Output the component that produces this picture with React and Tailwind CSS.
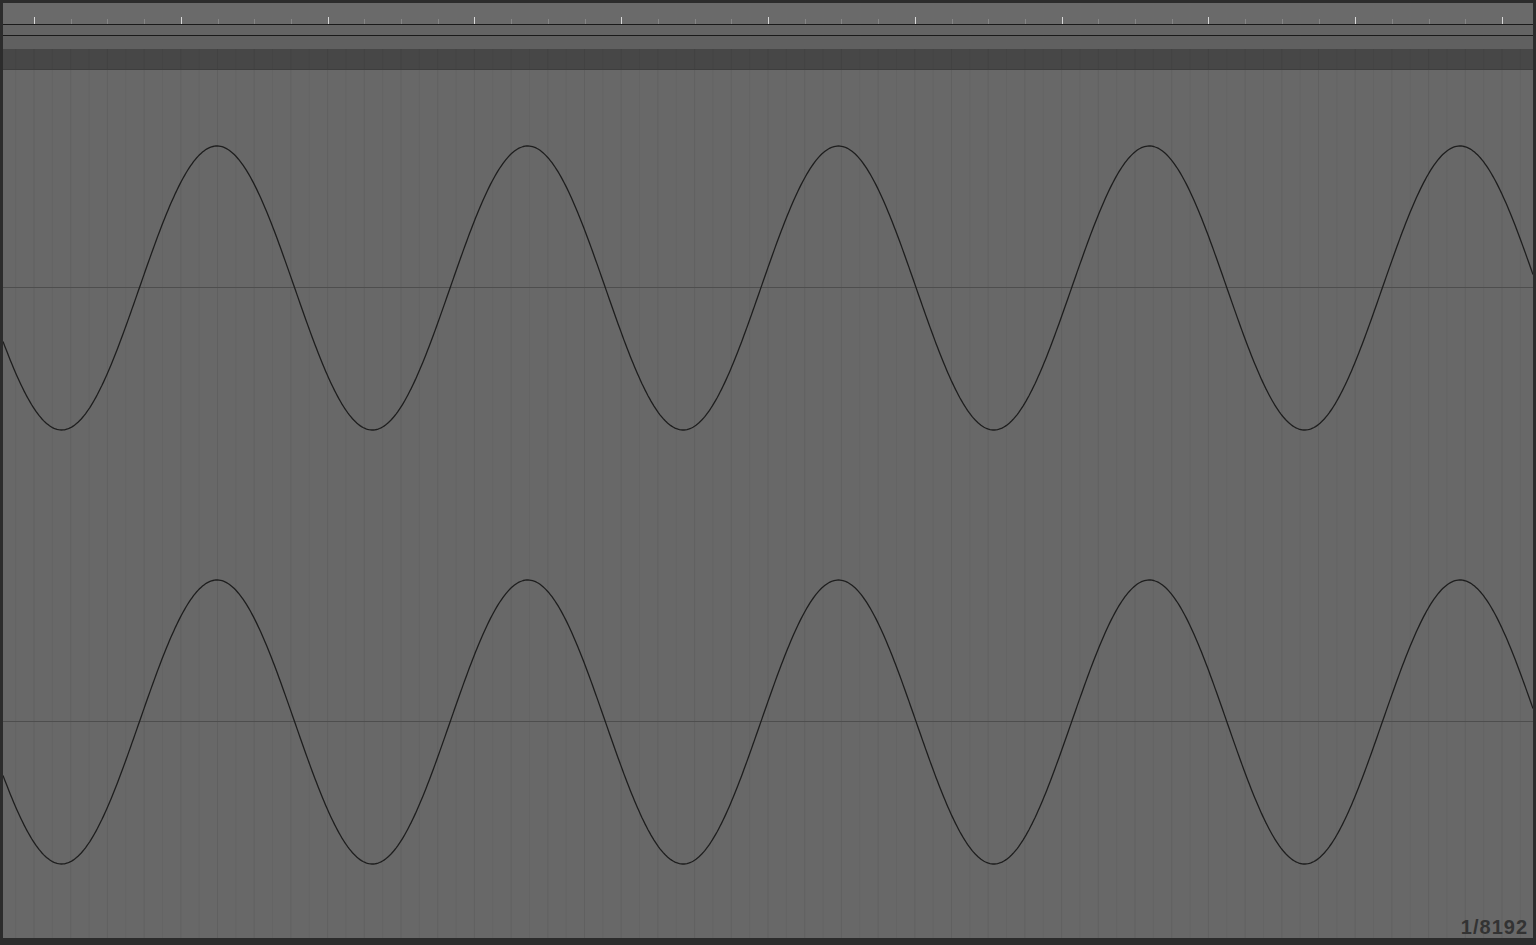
import React from "react";

const W = 1530;
const CH = 434;
const PERIOD = 310.75;
const PEAK_X = 214; // relative to content left (page x 217)
const AMP = 142;
const TICK = 36.7;

function wavePath(center) {
  let d = "";
  for (let x = 0; x <= W; x += 1.5) {
    const y = center - AMP * Math.cos((2 * Math.PI * (x - PEAK_X)) / PERIOD);
    d += (x === 0 ? "M" : "L") + x.toFixed(1) + " " + y.toFixed(1) + " ";
  }
  return d;
}

function gridLines(h) {
  const lines = [];
  for (let i = 0; ; i++) {
    const x = 31 + (TICK / 2) * i - TICK / 2;
    if (x > W) break;
    if (x < 0) continue;
    lines.push(
      <line
        key={i}
        x1={x}
        x2={x}
        y1={0}
        y2={h}
        stroke="#000"
        strokeOpacity={i % 2 === 1 ? 0.07 : 0.04}
        strokeWidth="1"
      />
    );
  }
  return lines;
}

function Ruler() {
  const ticks = [];
  for (let k = 0; ; k++) {
    const x = 31 + TICK * k;
    if (x > W) break;
    const major = k % 4 === 0;
    ticks.push(
      <line
        key={k}
        x1={Math.round(x) + 0.5}
        x2={Math.round(x) + 0.5}
        y1={major ? 14 : 16}
        y2={21}
        stroke={major ? "#d8d8d8" : "#858585"}
        strokeWidth="1"
      />
    );
  }
  return (
    <svg width="100%" height="21" className="block">
      {ticks}
    </svg>
  );
}

export default function App() {
  return (
    <div className="flex h-screen w-full flex-col bg-[#2c2c2c] px-[3px] pt-[3px] pb-[7px]">
      <div className="h-[21px] bg-[#6a6a6a]">
        <Ruler />
      </div>
      <div className="h-px bg-[#1a1a1a]" />
      <div className="h-[10px] bg-[#646464]" />
      <div className="h-px bg-[#1a1a1a]" />
      <div className="h-[13px] bg-[#606060]" />
      <div className="h-[21px] border-b border-[#3e3e3e] bg-[#474747]">
        <svg width="100%" height="20" className="block">
          {gridLines(20)}
        </svg>
      </div>
      <div className="relative flex-1 bg-[#686868]">
        <svg width="100%" height="100%" className="block">
          {gridLines(2 * CH)}
          <line x1="0" x2={W} y1={217.5} y2={217.5} stroke="#4e4e4e" strokeWidth="1" />
          <line x1="0" x2={W} y1={651.5} y2={651.5} stroke="#4e4e4e" strokeWidth="1" />
          <path d={wavePath(218)} fill="none" stroke="#1e1e1e" strokeWidth="1.3" />
          <path d={wavePath(652)} fill="none" stroke="#1e1e1e" strokeWidth="1.3" />
        </svg>
        <span className="absolute right-[5px] bottom-[-1px] font-['Liberation_Sans',Arial,sans-serif] text-[20px] leading-[24px] font-bold tracking-[1px] text-[#333333]">
          1/8192
        </span>
      </div>
    </div>
  );
}
